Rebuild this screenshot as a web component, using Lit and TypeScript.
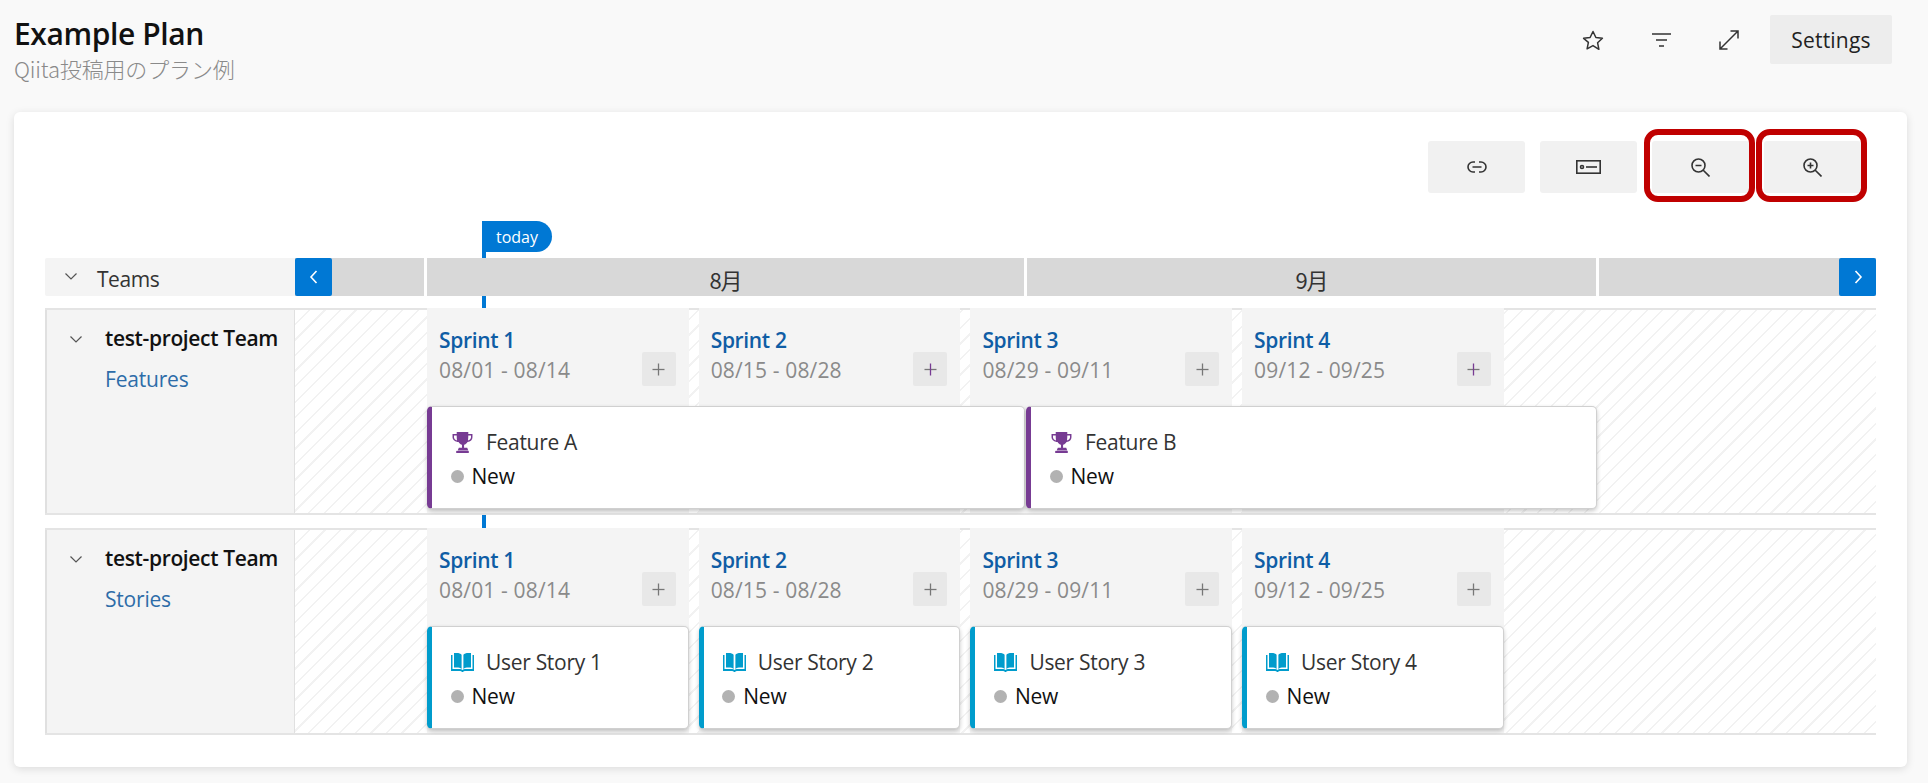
import { LitElement, html, css, svg } from 'lit';
import { customElement } from 'lit/decorators.js';

type Sprint = { name: string; dates: string; plus?: string };
type Item = { title: string; width: number };

const SPRINTS: Sprint[] = [
  { name: 'Sprint 1', dates: '08/01 - 08/14' },
  { name: 'Sprint 2', dates: '08/15 - 08/28' },
  { name: 'Sprint 3', dates: '08/29 - 09/11' },
  { name: 'Sprint 4', dates: '09/12 - 09/25' },
];

const FEATURES: Item[] = [
  { title: 'Feature A', width: 598 },
  { title: 'Feature B', width: 571 },
];

const STORIES: Item[] = [
  { title: 'User Story 1', width: 261.7 },
  { title: 'User Story 2', width: 261.7 },
  { title: 'User Story 3', width: 261.7 },
  { title: 'User Story 4', width: 261.7 },
];

const chevronDown = html`<svg class="chev" width="14" height="14" viewBox="0 0 14 14" fill="none" stroke="#555" stroke-width="1.2"><path d="M1.500 4.500 7 10 12.500 4.500" /></svg>`;

const trophy = svg`<svg class="item-icon" width="21" height="21" viewBox="1 1 19 20" fill="#773b93">
  <path d="M5 1h11v2h4v3c0 2.600-1.800 4.300-4.700 4.600-.8 1.400-2 2.300-3.300 2.600V16h3l1 2.500H5.900L7 16h3v-2.800c-1.300-.3-2.500-1.200-3.300-2.600C3.800 10.300 1 8.600 1 6V3h4V1Zm-2.600 3.400V6c0 1.500 1.100 2.700 2.900 3.100-.2-1.100-.3-2.800-.3-4.700H2.400Zm16.200 0H16c0 1.900-.1 3.600-.3 4.700 1.800-.4 2.900-1.600 2.900-3.100V4.400Z" />
  <path d="M4.500 19h12v2h-12z" />
</svg>`;

const book = svg`<svg class="item-icon book" width="23" height="19" viewBox="0 0 23 19" fill="#009ccc">
  <path d="M3 0h2.500C8 0 9.800.6 10.600 1.800V16c-1-.9-3-1.400-5.100-1.400H3V0Zm17 0h-2.500C15 0 13.200.6 12.400 1.800V16c1-.9 3-1.400 5.100-1.400H20V0Z" />
  <path d="M0 2h1.500v14H9c1 0 1.800.3 2.500 1 .7-.7 1.500-1 2.500-1h7.500V2H23v16h-9c-.9 0-1.600.3-2 1h-1c-.4-.7-1.100-1-2-1H0V2Z" />
</svg>`;

@customElement('app-root')
export class AppRoot extends LitElement {
  static styles = css`
    :host {
      display: block;
      height: 783px;
      overflow: hidden;
      background: #f9f9f9;
      color: #222;
      font-family: 'Open Sans', 'Noto Sans CJK JP', sans-serif;
      font-size: 21px;
      letter-spacing: -0.2px;
    }

    .page-head {
      display: flex;
      justify-content: space-between;
      height: 112px;
      padding: 15px 36px 0 14px;
      box-sizing: border-box;
    }
    .title {
      font-size: 30px;
      line-height: 38px;
      font-weight: 600;
      letter-spacing: -0.4px;
      color: #111;
    }
    .subtitle {
      font-size: 22px;
      line-height: 30px;
      letter-spacing: -0.15px;
      color: #8a8a8a;
      font-family: 'Noto Sans CJK JP', sans-serif;
      font-weight: 300;
    }
    .head-actions {
      display: flex;
      align-items: flex-start;
    }
    .head-icon {
      width: 68px;
      height: 50px;
      display: flex;
      align-items: center;
      justify-content: center;
    }
    .settings {
      margin-left: 7px;
      width: 122px;
      height: 49px;
      display: flex;
      align-items: center;
      justify-content: center;
      background: #ededed;
      border-radius: 2px;
      font-weight: 500;
      letter-spacing: 0.2px;
    }

    .board {
      margin-left: 14px;
      width: 1893px;
      height: 655px;
      box-sizing: border-box;
      padding: 29px 31px 0 31px;
      background: #fff;
      border-radius: 6px;
      box-shadow: 0 2px 8px rgba(0, 0, 0, 0.12);
    }

    .toolbar {
      display: flex;
      justify-content: flex-end;
      gap: 15px;
      padding-right: 15px;
    }
    .tool {
      position: relative;
      width: 97px;
      height: 52px;
      display: flex;
      align-items: center;
      justify-content: center;
      background: #f1f1f1;
      border-radius: 3px;
    }
    /* hand-drawn highlight from the screenshot, sits over the button */
    .tool.marked::after {
      content: '';
      position: absolute;
      inset: -12px -6px -9px -8px;
      border: 6px solid #c00000;
      border-radius: 14px;
    }

    .timeline {
      position: relative;
      margin-top: 28px;
    }
    .flag {
      margin-left: 437px;
      width: 70px;
      height: 31px;
      box-sizing: border-box;
      padding-left: 14px;
      margin-bottom: 6px;
      display: flex;
      align-items: center;
      background: #0078d4;
      color: #fff;
      font-size: 16px;
      letter-spacing: 0;
      border-radius: 0 16px 16px 0;
    }
    .today-line {
      position: absolute;
      left: 437px;
      top: 31px;
      width: 4px;
      height: 276px;
      background: #0078d4;
    }

    .months {
      position: relative;
      display: flex;
      height: 38px;
      margin-bottom: 12px;
    }
    .teams-head {
      width: 250px;
      display: flex;
      align-items: center;
      gap: 19px;
      padding-left: 19px;
      box-sizing: border-box;
      background: #f4f4f4;
      border-radius: 2px 0 0 2px;
      color: #333;
    }
    .teams-head .chev {
      margin-top: -2px;
    }
    .teams-head span {
      padding-top: 3px;
      letter-spacing: -0.45px;
    }
    .month-track {
      flex: 1;
      display: grid;
      grid-template-columns: 129px 597px 569px 1fr;
      gap: 3px;
    }
    .month {
      background: #d8d8d8;
      display: flex;
      align-items: center;
      justify-content: center;
      padding-top: 3px;
      color: #333;
      font-family: 'Noto Sans CJK JP', sans-serif;
      font-size: 22px;
      letter-spacing: -1px;
    }
    .nav {
      position: absolute;
      top: 0;
      width: 37px;
      height: 38px;
      display: flex;
      align-items: center;
      justify-content: center;
      background: #0078d4;
      border-radius: 2px;
    }
    .nav.prev {
      left: 250px;
    }
    .nav.next {
      right: 0;
    }

    .row {
      position: relative;
      display: flex;
      height: 207px;
      box-sizing: border-box;
      border-top: 2px solid #e4e4e4;
      border-bottom: 2px solid #e4e4e4;
      margin-bottom: 13px;
    }
    .team {
      width: 250px;
      box-sizing: border-box;
      background: #f4f4f4;
      border-left: 2px solid #e0e0e0;
      border-right: 1px solid #e0e0e0;
      display: flex;
      padding: 14px 0 0 22px;
    }
    .chev {
      margin-top: 8px;
      flex: none;
    }
    .team-text {
      margin-left: 22px;
      line-height: 28px;
      white-space: nowrap;
    }
    .team-name {
      font-weight: 600;
      letter-spacing: -0.35px;
      color: #111;
    }
    .team-kind {
      margin-top: 13px;
      color: #2d6ca8;
    }

    .lane {
      flex: 1;
      display: grid;
      background: repeating-linear-gradient(135deg, #fff 0 9.4px, #f2f2f2 9.4px 11px);
    }
    .sprints,
    .items {
      grid-area: 1 / 1;
      display: flex;
      padding-left: 132px;
    }
    .sprints {
      gap: 10px;
      margin-top: -2px;
    }
    .items {
      padding-top: 96px;
    }
    .items.stories {
      gap: 10px;
    }
    .items.features {
      gap: 1px;
    }
    .sprint {
      width: 261.7px;
      box-sizing: border-box;
      padding: 17px 13px 0 12px;
      background: #f4f4f4;
    }
    .sprint-name {
      line-height: 30px;
      font-weight: 600;
      letter-spacing: -0.35px;
      color: #0f5da5;
    }
    .sprint-row {
      display: flex;
      justify-content: space-between;
      line-height: 30px;
      letter-spacing: 0.15px;
      color: #8a8a8a;
    }
    .plus {
      width: 34px;
      height: 34px;
      margin-top: -3px;
      display: flex;
      align-items: center;
      justify-content: center;
      background: #e8e8e8;
      border-radius: 2px;
    }

    .item {
      height: 103px;
      box-sizing: border-box;
      padding: 21px 0 0 20px;
      background: #fff;
      border: 1px solid #d0d0d0;
      border-left: 5px solid;
      border-radius: 5px;
      box-shadow: 0 2px 4px rgba(0, 0, 0, 0.22);
    }
    .item.feature {
      border-left-color: #773b93;
    }
    .item.story {
      border-left-color: #009ccc;
    }
    .item-title {
      display: flex;
      align-items: center;
      height: 28px;
      color: #333;
      letter-spacing: -0.3px;
    }
    .item-icon {
      flex: none;
    }
    .book {
      margin-left: -1px;
    }
    .item.feature .item-title span {
      margin-left: 13px;
    }
    .item.story .item-title span {
      margin-left: 12px;
    }
    .item-state {
      display: flex;
      align-items: center;
      height: 28px;
      margin-top: 6px;
      color: #111;
      letter-spacing: -0.2px;
    }
    .dot {
      width: 13px;
      height: 13px;
      margin: 0 8px 0 -1.5px;
      border-radius: 50%;
      background: #b2b2b2;
    }
  `;

  private plusIcon(accent = false) {
    return html`<svg width="13" height="13" viewBox="0 0 13 13" stroke="#777" stroke-width="1.300">
      <path d="M0.500 6.500h12" />
      <path d="M6.500 0.500v12" stroke=${accent ? '#773b93' : '#777'} />
    </svg>`;
  }

  private sprintColumn(s: Sprint, accent: boolean) {
    return html`
      <div class="sprint">
        <div class="sprint-name">${s.name}</div>
        <div class="sprint-row">
          <span>${s.dates}</span>
          <div class="plus">${this.plusIcon(accent)}</div>
        </div>
      </div>
    `;
  }

  private itemCard(item: Item, kind: 'feature' | 'story') {
    return html`
      <div class="item ${kind}" style="width:${item.width}px">
        <div class="item-title">
          ${kind === 'feature' ? trophy : book}
          <span>${item.title}</span>
        </div>
        <div class="item-state"><i class="dot"></i>New</div>
      </div>
    `;
  }

  private teamRow(kind: 'feature' | 'story') {
    const features = kind === 'feature';
    return html`
      <div class="row">
        <div class="team">
          ${chevronDown}
          <div class="team-text">
            <div class="team-name">test-project Team</div>
            <div class="team-kind">${features ? 'Features' : 'Stories'}</div>
          </div>
        </div>
        <div class="lane">
          <div class="sprints">
            ${SPRINTS.map((s, i) => this.sprintColumn(s, features && i % 2 === 1))}
          </div>
          <div class="items ${features ? 'features' : 'stories'}">
            ${(features ? FEATURES : STORIES).map((it) => this.itemCard(it, kind))}
          </div>
        </div>
      </div>
    `;
  }

  render() {
    return html`
      <div class="page-head">
        <div>
          <div class="title">Example Plan</div>
          <div class="subtitle">Qiita投稿用のプラン例</div>
        </div>
        <div class="head-actions">
          <div class="head-icon">
            <svg width="22" height="21" viewBox="0 0 22 21" fill="none" stroke="#333" stroke-width="1.500" stroke-linejoin="round">
              <path d="M11 1.500l2.900 6 6.500.8-4.800 4.500 1.300 6.500L11 15.600l-5.900 3.200 1.300-6.500L1.600 8.300l6.500-.8z" />
            </svg>
          </div>
          <div class="head-icon">
            <svg width="19" height="14" viewBox="0 0 19 14" stroke="#333" stroke-width="1.500">
              <path d="M0 1h19M4 7h11M7 13h5" />
            </svg>
          </div>
          <div class="head-icon">
            <svg width="20" height="20" viewBox="0 0 20 20" fill="none" stroke="#333" stroke-width="1.500">
              <path d="M1 19 19 1M11.500 1H19v7.500M1 11.500V19h7.500" />
            </svg>
          </div>
          <div class="settings">Settings</div>
        </div>
      </div>

      <div class="board">
        <div class="toolbar">
          <div class="tool">
            <svg width="20" height="12" viewBox="0 0 20 12" fill="none" stroke="#333" stroke-width="1.600">
              <path d="M8 1H6a5 5 0 0 0 0 10h2M12 1h2a5 5 0 0 1 0 10h-2M5.500 6h9" />
            </svg>
          </div>
          <div class="tool">
            <svg width="25" height="14" viewBox="0 0 25 14" fill="none" stroke="#333" stroke-width="1.600">
              <rect x="0.800" y="0.800" width="23.400" height="12.400" />
              <circle cx="6" cy="7" r="1.500" />
              <path d="M10 7h11" />
            </svg>
          </div>
          <div class="tool marked">
            <svg width="19" height="19" viewBox="0 0 19 19" fill="none" stroke="#333" stroke-width="1.600">
              <circle cx="7.500" cy="7.500" r="6.500" />
              <path d="M12 12l6.500 6.500M4.500 7.500h6" />
            </svg>
          </div>
          <div class="tool marked">
            <svg width="19" height="19" viewBox="0 0 19 19" fill="none" stroke="#333" stroke-width="1.600">
              <circle cx="7.500" cy="7.500" r="6.500" />
              <path d="M12 12l6.500 6.500M4.500 7.500h6M7.500 4.500v6" />
            </svg>
          </div>
        </div>

        <div class="timeline">
          <div class="flag">today</div>
          <div class="today-line"></div>
          <div class="months">
            <div class="teams-head">${chevronDown}<span>Teams</span></div>
            <div class="month-track">
              <div class="month"></div>
              <div class="month">8月</div>
              <div class="month">9月</div>
              <div class="month"></div>
            </div>
            <div class="nav prev">
              <svg width="10" height="16" viewBox="0 0 10 16" fill="none" stroke="#fff" stroke-width="1.600"><path d="M7.500 2 2 8l5.500 6" /></svg>
            </div>
            <div class="nav next">
              <svg width="10" height="16" viewBox="0 0 10 16" fill="none" stroke="#fff" stroke-width="1.600"><path d="M2.500 2 8 8l-5.500 6" /></svg>
            </div>
          </div>
          ${this.teamRow('feature')}
          ${this.teamRow('story')}
        </div>
      </div>
    `;
  }
}
